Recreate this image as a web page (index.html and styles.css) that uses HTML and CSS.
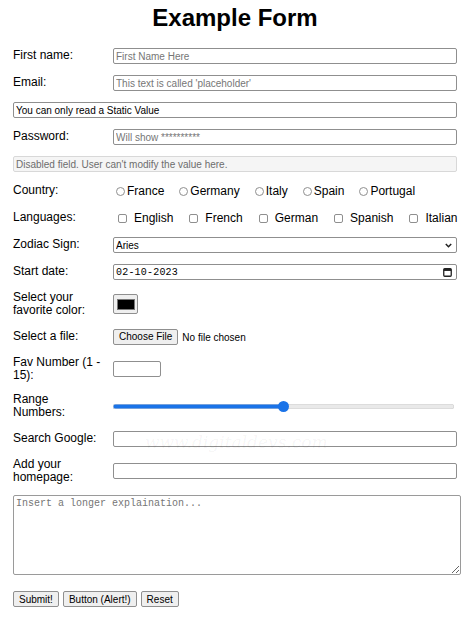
FILE: index.html
```html
<!DOCTYPE html>
<html lang="en">
<head>
  <meta charset="UTF-8" />
  <meta name="viewport" content="width=device-width, initial-scale=1.0" />
  <title>Example Form</title>
  <link rel="stylesheet" href="styles.css">
</head>
<body>
  <div class="page">
    <h1 class="title">Example Form</h1>

    <form class="form" onsubmit="return false;">
      <label class="field-label" for="fname">First name:</label>
      <input class="text-input" id="fname" type="text" placeholder="First Name Here">

      <label class="field-label" for="email">Email:</label>
      <input class="text-input" id="email" type="email" placeholder="This text is called 'placeholder'">

      <input class="text-input full" type="text" value="You can only read a Static Value" readonly>

      <label class="field-label" for="pwd">Password:</label>
      <input class="text-input" id="pwd" type="password" placeholder="Will show **********">

      <input class="text-input full" type="text" value="Disabled field. User can't modify the value here." disabled>

      <span class="field-label">Country:</span>
      <div class="choices radios">
        <label class="choice"><input type="radio" name="country" value="fr">France</label>
        <label class="choice"><input type="radio" name="country" value="de">Germany</label>
        <label class="choice"><input type="radio" name="country" value="it">Italy</label>
        <label class="choice"><input type="radio" name="country" value="es">Spain</label>
        <label class="choice"><input type="radio" name="country" value="pt">Portugal</label>
      </div>

      <span class="field-label">Languages:</span>
      <div class="choices checks">
        <label class="choice"><input type="checkbox" value="en">English</label>
        <label class="choice"><input type="checkbox" value="fr">French</label>
        <label class="choice"><input type="checkbox" value="de">German</label>
        <label class="choice"><input type="checkbox" value="es">Spanish</label>
        <label class="choice"><input type="checkbox" value="it">Italian</label>
      </div>

      <label class="field-label" for="zodiac">Zodiac Sign:</label>
      <div class="box-field">
        <select id="zodiac" class="bare">
          <option>Aries</option>
          <option>Taurus</option>
          <option>Gemini</option>
          <option>Cancer</option>
          <option>Leo</option>
          <option>Virgo</option>
        </select>
        <svg class="field-icon" width="7" height="5" viewBox="0 0 7 5"><path d="M0.8 0.9 L3.5 3.7 L6.2 0.9" fill="none" stroke="#222" stroke-width="1.5"/></svg>
      </div>

      <label class="field-label" for="start">Start date:</label>
      <div class="box-field">
        <input id="start" class="bare date-text" type="text" value="02-10-2023">
        <svg class="field-icon" width="9" height="9" viewBox="0 0 9 9"><rect x="0.75" y="0.75" width="7.5" height="7.5" rx="1" fill="none" stroke="#222" stroke-width="1.3"/><rect x="0.75" y="0.75" width="7.5" height="2.2" fill="#222"/></svg>
      </div>

      <label class="field-label" for="favcolor">Select your favorite color:</label>
      <div><input id="favcolor" class="color-input" type="color" value="#000000"></div>

      <label class="field-label" for="file">Select a file:</label>
      <div><input id="file" class="file-input" type="file"></div>

      <label class="field-label" for="favnum">Fav Number (1 - 15):</label>
      <div><input id="favnum" class="text-input num-input" type="number" min="1" max="15"></div>

      <label class="field-label" for="range">Range Numbers:</label>
      <div><input id="range" class="range-input" type="range" min="0" max="100" value="50"></div>

      <label class="field-label" for="search">Search Google:</label>
      <input class="text-input" id="search" type="search">

      <label class="field-label" for="home">Add your homepage:</label>
      <input class="text-input" id="home" type="url">

      <textarea class="full notes" placeholder="Insert a longer explaination..."></textarea>

      <div class="full actions">
        <button class="btn" type="submit">Submit!</button>
        <button class="btn" type="button" onclick="alert('Hello!')">Button (Alert!)</button>
        <button class="btn" type="reset">Reset</button>
      </div>
    </form>

    <div class="watermark">www.digitaldevs.com</div>
  </div>
</body>
</html>
```

FILE: styles.css
```css
body {
  margin: 0;
  font-family: "Liberation Sans", Arial, sans-serif;
  font-size: 12px;
  color: #000;
  background: #fff;
}

.page {
  position: relative;
  width: 444px;
  margin-left: 13px;
}

.title {
  margin: 4px 0 16px;
  font-size: 24px;
  line-height: 28px;
  font-weight: bold;
  text-align: center;
}

.form {
  display: grid;
  grid-template-columns: 100px minmax(0, 1fr);
  row-gap: 11px;
  align-items: center;
}

.full {
  grid-column: 1 / -1;
}

.field-label {
  max-width: 88px;
  line-height: 13.3px;
}

.text-input,
.box-field {
  box-sizing: border-box;
  height: 16px;
  margin: 0;
  padding: 0 2px;
  border: 1px solid #8f8f8f;
  border-radius: 2px;
  font-family: "Liberation Sans", Arial, sans-serif;
  font-size: 10px;
  color: #000;
  background: #fff;
  outline: none;
}

.text-input::placeholder,
.notes::placeholder {
  color: #767676;
}

.text-input:disabled {
  border-color: #d8d8d8;
  background: #f5f5f5;
  color: #6d6d6d;
}

.num-input {
  width: 48px;
}

/* radios + checkboxes */
.choices {
  display: flex;
  align-items: center;
  height: 16px;
}

.radios {
  gap: 15px;
  padding-left: 3px;
}

.checks {
  gap: 16px;
  padding-left: 5px;
}

.choice {
  display: inline-flex;
  align-items: center;
  white-space: nowrap;
}

.radios .choice {
  gap: 2px;
}

.checks .choice {
  gap: 7px;
}

.choice input {
  -webkit-appearance: none;
  appearance: none;
  box-sizing: border-box;
  width: 9px;
  height: 9px;
  margin: 1px 0 0;
  border: 1px solid #8f8f8f;
  background: #fff;
}

.choice input[type="radio"] {
  border-radius: 50%;
}

.choice input[type="checkbox"] {
  border-radius: 2px;
}

/* select + date */
.box-field {
  display: flex;
  align-items: center;
  padding: 0 4px 0 0;
}

.bare {
  -webkit-appearance: none;
  appearance: none;
  flex: 1;
  min-width: 0;
  height: 14px;
  margin: 0;
  padding: 0 2px;
  border: none;
  background: transparent;
  font-family: "Liberation Sans", Arial, sans-serif;
  font-size: 10px;
  color: #000;
  outline: none;
}

.date-text {
  font-family: "Liberation Mono", monospace;
  letter-spacing: 0.2px;
}

.field-icon {
  flex: none;
}

/* color */
.color-input {
  display: block;
  box-sizing: border-box;
  width: 25px;
  height: 20px;
  margin: 0;
  padding: 0;
  border: 1px solid #8f8f8f;
  border-radius: 2px;
  background: #efefef;
}

.color-input::-webkit-color-swatch-wrapper {
  padding: 3.5px 2.5px;
}

.color-input::-webkit-color-swatch {
  border: 1px solid #777;
  border-radius: 0;
}

/* file */
.file-input {
  display: block;
  font-family: "Liberation Sans", Arial, sans-serif;
  font-size: 10px;
  color: #000;
}

.file-input::file-selector-button,
.btn {
  box-sizing: border-box;
  height: 16px;
  padding: 0 5px;
  border: 1px solid #8f8f8f;
  border-radius: 2px;
  background: #efefef;
  font-family: "Liberation Sans", Arial, sans-serif;
  font-size: 10px;
  color: #000;
}

.file-input::file-selector-button {
  margin-right: 4px;
}

/* range */
.range-input {
  -webkit-appearance: none;
  appearance: none;
  display: block;
  width: 341px;
  height: 5px;
  margin: 0;
  border-radius: 3px;
  background: linear-gradient(to right, #1a73e8 50%, #e9e9e9 50%);
  box-shadow: inset 0 0 0 0.5px #d0d0d0;
}

.range-input::-webkit-slider-thumb {
  -webkit-appearance: none;
  width: 11px;
  height: 11px;
  border-radius: 50%;
  background: #1a73e8;
}

/* textarea */
.notes {
  box-sizing: border-box;
  width: 448px;
  height: 80px;
  margin: 0 -4px 0 0;
  padding: 2px;
  border: 1px solid #9a9a9a;
  border-radius: 2px;
  font-family: "Liberation Mono", monospace;
  font-size: 10px;
}

.actions {
  display: flex;
  gap: 4px;
  margin-top: 5px;
}

.watermark {
  position: absolute;
  left: 132px;
  top: 428px;
  font-family: "DejaVu Serif", serif;
  font-style: italic;
  font-size: 17px;
  color: rgba(0, 0, 0, 0.05);
  pointer-events: none;
}
```
